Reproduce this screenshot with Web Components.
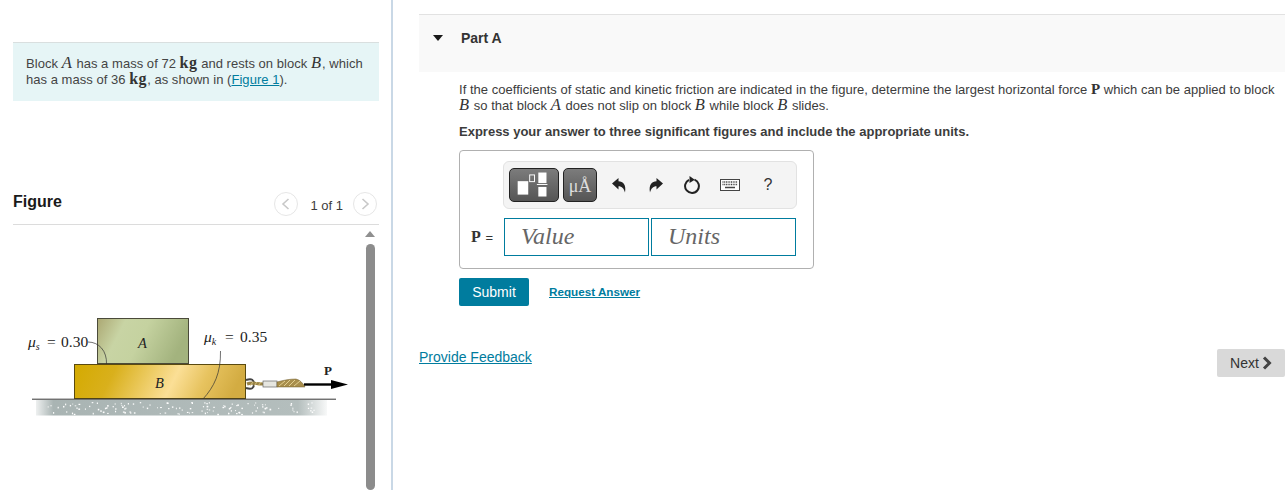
<!DOCTYPE html>
<html lang="en"><head><meta charset="utf-8"><title>Part A</title>
<style>
html,body{margin:0;padding:0;background:#fff}
body{font:13px/16px "Liberation Sans",Arial,sans-serif;color:#3c3c3c;width:1285px;height:490px;overflow:hidden}
</style></head><body>
<mp-page>
  <mp-left slot="left">
    <mp-intro>Block <i>A</i> has a mass of 72 <b>kg</b> and rests on block <i>B</i>, which has a mass of 36 <b>kg</b>, as shown in (<a>Figure 1</a>).</mp-intro>
    <mp-figure></mp-figure>
  </mp-left>
  <mp-right slot="right">
    <mp-part title="Part A"></mp-part>
  </mp-right>
</mp-page>
<script>
const def=(name,html,init)=>customElements.define(name,class extends HTMLElement{
  constructor(){super();this.attachShadow({mode:'open'}).innerHTML=html;init&&init(this.shadowRoot,this)}
});
const mathCss=`.m{font:italic 16.5px/0 "Liberation Serif",serif;color:#333;padding-right:1px}.u{font:bold 15px/0 "Liberation Serif",serif;color:#333}`;

def('mp-page',`<style>:host{display:flex;width:1285px;height:490px;overflow:hidden}
.l{width:391px;flex:none;position:relative;border-right:1px solid #c9d8e6;box-sizing:content-box}
.r{flex:1;min-width:0;border-left:1px solid #c9d8e6}</style>
<div class="l"><slot name="left"></slot></div><div class="r"><slot name="right"></slot></div>`);

def('mp-left',`<style>:host{display:block;padding:42px 12px 0 13px}</style><slot></slot>`);

def('mp-intro',`<style>:host{display:block;width:366px;height:59px;box-sizing:border-box;background:#e6f5f6;border-top:1px solid #d9dfdf;padding:13px 13px 0 13px;line-height:16px;color:#444;letter-spacing:.035px}
::slotted(i){font:italic 16.5px/0 "Liberation Serif",serif;color:#333;padding-right:1px}
::slotted(b){font:bold 16px/0 "Liberation Serif",serif;color:#333;letter-spacing:.5px}
::slotted(a){color:#007c9e;text-decoration:underline}</style><slot></slot>`);

def('mp-pager-btn',`<style>:host{display:block;width:26px;height:24px}svg{display:block}</style>
<svg width="26" height="24" viewBox="0 0 26 24"><circle cx="13" cy="12" r="11.5" fill="#fff" stroke="#e6e6e6"/><path id="p" d="M15.500 7 L10 12 L15.500 17" fill="none" stroke="#c8c8c8" stroke-width="1.6"/></svg>`,
(s,h)=>{if(h.hasAttribute('next'))s.getElementById('p').setAttribute('d','M10.500 7 L16 12 L10.500 17')});

def('mp-figure',`<style>:host{display:block;margin-top:88px;width:366px}
.h{display:flex;align-items:center;height:35px;border-bottom:1px solid #dcdcdc}
.t{font:bold 16px/20px "Liberation Sans",sans-serif;color:#1a1a1a;flex:1;position:relative;top:-5px}
.p{display:flex;align-items:center;gap:10px;font-size:13px;color:#3c3c3c;margin-right:1px;position:relative;top:-3px}
.p span{position:relative;top:2px;left:1px}
.b{display:flex;height:265px}
svg.fig{display:block;flex:none;margin-left:-13px}
.sb{flex:none;width:10px;margin-left:-1px;display:flex;flex-direction:column;align-items:center}
.up{width:0;height:0;border:5px solid transparent;border-top:0;border-bottom:6px solid #8f8f8f;margin-top:6px}
.th{width:9px;flex:1;background:#8c8c8c;border-radius:5px;margin-top:7px}
text{font-family:"Liberation Serif",serif;fill:#222}
</style>
<div class="h"><div class="t">Figure</div><div class="p"><mp-pager-btn></mp-pager-btn><span>1 of 1</span><mp-pager-btn next></mp-pager-btn></div></div>
<div class="b">
<svg class="fig" width="366" height="265" viewBox="0 225 366 265">
<defs>
<linearGradient id="ga" x1="0" y1="0" x2="1" y2="0.25"><stop offset="0" stop-color="#aca873"/><stop offset=".3" stop-color="#c8d4a4"/><stop offset=".55" stop-color="#c5d2a0"/><stop offset="1" stop-color="#a3b37e"/></linearGradient>
<linearGradient id="gb" x1="0" y1="0" x2="1" y2="0.1"><stop offset="0" stop-color="#d4aa00"/><stop offset=".25" stop-color="#d9b01c"/><stop offset=".62" stop-color="#fbdf96"/><stop offset=".8" stop-color="#e7c35f"/><stop offset="1" stop-color="#d3ac42"/></linearGradient>
<linearGradient id="gg" x1="0" y1="0" x2="1" y2="0"><stop offset="0" stop-color="#a9b4b3" stop-opacity=".2"/><stop offset=".06" stop-color="#a9b4b3"/><stop offset=".9" stop-color="#b4bebd"/><stop offset="1" stop-color="#b4bebd" stop-opacity=".1"/></linearGradient>
</defs>
<rect x="36" y="400" width="291" height="15.500" fill="url(#gg)"/>
<g id="sp" fill="#fff"></g>
<rect x="97.5" y="318.5" width="91" height="45" fill="url(#ga)" stroke="#4a4a3a"/>
<rect x="74.5" y="364.5" width="171" height="34" fill="url(#gb)" stroke="#5a4a10"/>
<path d="M32 399.2H336" stroke="#333" stroke-width="1"/>
<path d="M88 342C99 342 107 351 106.500 364" fill="none" stroke="#333" stroke-width=".7"/>
<path d="M220.500 351C221 373 214 387 203 399" fill="none" stroke="#333" stroke-width=".7"/>
<path d="M246 380C252 378 254 380 254 384C254 388 252 390 246 388" fill="none" stroke="#444" stroke-width="2"/>
<path d="M247 384C252 382 256 384 263 384" stroke="#9a8446" stroke-width="3.200" fill="none"/>
<path d="M250 386L253 382M254 386L257 382M258 386L261 382" stroke="#e2cf91" stroke-width=".8"/>
<rect x="263" y="381" width="14" height="6" fill="#e6e6e0" stroke="#666" stroke-width=".7"/>
<path d="M277 382C284 380 290 379 296 379C300 380 303 383 305 387H277Z" fill="#a88e4c" stroke="#6d5a2a" stroke-width=".5"/>
<path d="M279 386L285 381M284 386L290 380M289 386L295 380M294 386L300 381" stroke="#e2cf91" stroke-width="1"/>
<path d="M304 384.500H333" stroke="#000" stroke-width="2.400"/>
<path d="M331 380L348 384.500L331 389Z" fill="#000"/>
<text y="347" font-size="15.500"><tspan x="28" font-style="italic">μ</tspan><tspan font-style="italic" font-size="10" dy="3">s</tspan><tspan x="47" dy="-3">=</tspan><tspan x="61">0.30</tspan></text>
<text x="138" y="348" font-size="14.500" font-style="italic">A</text>
<text x="155" y="388" font-size="14.500" font-style="italic">B</text>
<text y="342" font-size="15.500"><tspan x="204" font-style="italic">μ</tspan><tspan font-style="italic" font-size="10" dy="3">k</tspan><tspan x="225" dy="-3">=</tspan><tspan x="240">0.35</tspan></text>
<text x="324" y="375" font-size="13" font-weight="bold">P</text>
</svg>
<div class="sb"><div class="up"></div><div class="th"></div></div>
</div>`,(s)=>{
 const g=s.getElementById('sp');let x=12345,o='';
 const r=()=>(x=(x*1103515245+12345)&0x7fffffff)/0x7fffffff;
 for(let i=0;i<130;i++){o+=`<rect x="${(46+r()*272).toFixed(1)}" y="${(402+r()*12).toFixed(1)}" width="${(.8+r()).toFixed(1)}" height="${(.8+r()*.9).toFixed(1)}"/>`}
 g.innerHTML=o;
});

def('mp-right',`<style>:host{display:block;padding:14px 0 0 26px}</style><slot></slot>`);

def('mp-tool',`<style>:host{display:flex;align-items:center;justify-content:center;box-sizing:border-box;height:34px;flex:none}
:host([dark]){background:linear-gradient(#7c7c7c,#555);border:1px solid #222;border-radius:5px;color:#eee}
</style><slot></slot>`);

def('mp-toolbar',`<style>:host{display:flex;align-items:center;box-sizing:border-box;width:294px;height:48px;margin-left:43px;background:#f4f4f4;border:1px solid #e2e2e2;border-radius:6px;padding:0 0 0 5px}
svg{display:block}
.mu{font:18px/1 "Liberation Serif",serif;color:#ddd;position:relative;top:1px}
.q{font:16px/1 "Liberation Sans",sans-serif;color:#333}
</style>
<mp-tool dark style="width:50px;margin-right:4px"><svg width="50" height="34" viewBox="509 168 50 34"><g fill="#fff"><rect x="517" y="181" width="11" height="14"/><rect x="538.500" y="172" width="8.500" height="11"/><rect x="537" y="184" width="11" height="1"/><rect x="538.500" y="187" width="8.500" height="10"/></g><rect x="529.500" y="174.500" width="5" height="7" fill="none" stroke="#fff"/></svg></mp-tool>
<mp-tool dark style="width:34px"><span class="mu">μÅ</span></mp-tool>
<mp-tool style="width:16px;margin-left:14px"><svg width="16" height="17" viewBox="0 0 16 17"><path d="M1 6.500L7.500 1V4.300C12 4.300 15.500 8 14 15.500C13 11.500 11 9.200 7.500 9.200V12.500Z" fill="#222"/></svg></mp-tool>
<mp-tool style="width:16px;margin-left:21px"><svg width="16" height="17" viewBox="0 0 16 17"><path d="M15 6.500L8.500 1V4.300C4 4.300 .5 8 2 15.500C3 11.500 5 9.200 8.500 9.200V12.500Z" fill="#222"/></svg></mp-tool>
<mp-tool style="width:18px;margin-left:19px"><svg width="18" height="18" viewBox="0 0 18 18"><path d="M11.500 3.600A6.900 6.900 0 1 1 6 3.800" fill="none" stroke="#222" stroke-width="2"/><path d="M6.500 0L11.800 3.800L6.500 7Z" fill="#222"/></svg></mp-tool>
<mp-tool style="width:20px;margin-left:19px"><svg width="20" height="12" viewBox="0 0 20 12"><rect x=".5" y=".5" width="19" height="11" fill="#fff" stroke="#444"/><path d="M2.500 3H17.500M2.500 5.500H17.500" stroke="#444" stroke-width="1.500" stroke-dasharray="1 .7"/><path d="M5 8.500H15" stroke="#444" stroke-width="1.500"/></svg></mp-tool>
<mp-tool style="width:10px;margin-left:23px"><span class="q">?</span></mp-tool>`);

def('mp-input',`<style>:host{display:flex;align-items:center;box-sizing:border-box;width:145px;height:38px;border:1px solid #007c9e;padding:0 0 2px 16px;font:italic 24px/1 "Liberation Serif",serif;color:#666;background:#fff}</style><slot></slot>`);

def('mp-answer',`<style>:host{display:block;box-sizing:border-box;width:355px;height:119px;border:1px solid #b0b0b0;border-radius:4px;padding:10px 0 0 0;background:#fff}
.row{display:flex;align-items:center;margin-top:9px}
.lab{width:44px;box-sizing:border-box;padding-left:11px;font:13px/1 "Liberation Sans",sans-serif;color:#333;white-space:nowrap}
.lab b{font:bold 16px/1 "Liberation Serif",serif;margin-right:1px}
.g{display:flex;gap:2px}</style>
<mp-toolbar></mp-toolbar>
<div class="row"><div class="lab"><b>P</b> =</div><div class="g"><mp-input>Value</mp-input><mp-input>Units</mp-input></div></div>`);

def('mp-part',`<style>:host{display:block;width:866px}
.hd{display:flex;align-items:flex-start;height:58px;box-sizing:border-box;background:#f9f9f9;border-top:1px solid #e2e2e2;padding:15px 0 0 14px}
.tri{width:0;height:0;border:5.500px solid transparent;border-top:6px solid #1a1a1a;border-bottom:0;margin-top:5px}
.ti{font:bold 14px/16px "Liberation Sans",sans-serif;color:#333;margin-left:18px}
.bd{padding:10px 0 0 40px;color:#3c3c3c}
p{margin:0;width:820px}
.q{letter-spacing:.03px}
.e{font-weight:bold;margin:10px 0 10px;font-size:13px}
${mathCss}
.acts{display:flex;align-items:center;margin-top:9px}
.sub{display:flex;align-items:center;justify-content:center;width:70px;height:28px;background:#007c9e;color:#fff;border-radius:2px;font-size:14px}
.req{font:bold 11.700px/16px "Liberation Sans",sans-serif;color:#007c9e;text-decoration:underline;margin-left:20px}
.ft{display:flex;justify-content:space-between;align-items:flex-start;margin-top:33px;}
.fb{font-size:14px;color:#007c9e;text-decoration:underline;line-height:16px;margin-top:10px}
.nx{display:flex;align-items:center;justify-content:center;gap:3px;width:68px;height:28px;background:#d9d9d9;border-radius:2px;color:#333;font-size:14px;margin-top:10px}
</style>
<div class="hd"><div class="tri"></div><div class="ti">Part A</div></div>
<div class="bd"><p class="q">If the coefficients of static and kinetic friction are indicated in the figure, determine the largest horizontal force <b class="u">P</b> which can be applied to block <i class="m">B</i> so that block <i class="m">A</i> does not slip on block <i class="m">B</i> while block <i class="m">B</i> slides.</p>
<p class="e">Express your answer to three significant figures and include the appropriate units.</p>
<mp-answer></mp-answer>
<div class="acts"><div class="sub">Submit</div><div class="req">Request Answer</div></div></div>
<div class="ft"><div class="fb">Provide Feedback</div><div class="nx">Next <svg width="10" height="14" viewBox="0 0 10 14"><path d="M2 1.500L7.500 7L2 12.500" fill="none" stroke="#444" stroke-width="3"/></svg></div></div>`);
</script>
</body></html>
